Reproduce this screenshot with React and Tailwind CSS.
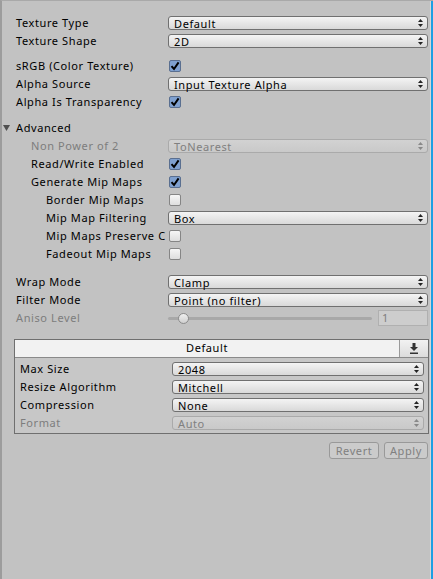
import { useState } from "react";

const font = { fontFamily: '"Noto Sans", "DejaVu Sans", sans-serif' };

// small up/down arrows on the right of every popup
function Arrows({ dim }) {
  return (
    <svg width="5" height="8" viewBox="0 0 5 8" className={dim ? "opacity-40" : ""}>
      <path d="M2.5 0 L5 3 H0 Z" fill="#222" />
      <path d="M2.5 8 L5 5 H0 Z" fill="#222" />
    </svg>
  );
}

function Popup({ value, disabled }) {
  return (
    <div
      className={`flex h-[14px] flex-1 items-center justify-between rounded-[3px] border pl-[5px] pr-[4px] text-[11px] leading-none ${
        disabled
          ? "border-[#aaa] bg-gradient-to-b from-[#d2d2d2] to-[#c9c9c9] text-[#808080]"
          : "border-[#707070] bg-gradient-to-b from-[#f4f4f4] to-[#d9d9d9] text-black"
      }`}
    >
      <span className="tracking-[0.6px]">{value}</span>
      <Arrows dim={disabled} />
    </div>
  );
}

function Check({ on }) {
  return (
    <div
      className={`ml-[1px] flex h-[12px] w-[12px] items-center justify-center rounded-[2px] border ${
        on ? "border-[#5a6f90] bg-[#7fa0cf]" : "border-[#858585] bg-gradient-to-b from-[#f6f6f6] to-[#dedede]"
      }`}
    >
      {on && (
        <svg width="10" height="10" viewBox="0 0 10 10">
          <path d="M1.5 5.2 L4 8 L8.6 1.4" fill="none" stroke="#000" strokeWidth="2" />
        </svg>
      )}
    </div>
  );
}

function Row({ label, indent = 14, dim, children, labelW = 166, padR = 2 }) {
  return (
    <div className="flex h-[18px] items-center" style={{ paddingRight: padR }}>
      <div
        className={`shrink-0 whitespace-nowrap overflow-hidden text-[11px] tracking-[0.6px] ${dim ? "text-[#7d7d7d]" : "text-black"}`}
        style={{ width: labelW, paddingLeft: indent }}
      >
        {label}
      </div>
      <div className="flex flex-1 items-center">{children}</div>
    </div>
  );
}

export default function App() {
  const [open, setOpen] = useState(true);

  return (
    <div
      className="flex h-[579px] w-[433px] border-t border-l-2 border-t-[#a9a9a9] border-l-[#9c9c9c] bg-[#c2c2c2]"
      style={font}
    >
      <div className="flex flex-1 flex-col pt-[13px]">
        <Row label="Texture Type"><Popup value="Default" /></Row>
        <Row label="Texture Shape"><Popup value="2D" /></Row>

        <div className="mt-[7px]">
          <Row label="sRGB (Color Texture)"><Check on /></Row>
          <Row label="Alpha Source"><Popup value="Input Texture Alpha" /></Row>
          <Row label="Alpha Is Transparency"><Check on /></Row>
        </div>

        <div className="mt-[8px]">
          <button
            className="flex h-[18px] items-center text-[11px] tracking-[0.6px] text-black"
            onClick={() => setOpen(!open)}
          >
            <svg width="14" height="10" viewBox="0 0 14 10">
              <path d="M1 2 H8 L4.5 8 Z" fill="#505050" />
            </svg>
            Advanced
          </button>
          {open && (
            <>
              <Row label="Non Power of 2" indent={29} dim><Popup value="ToNearest" disabled /></Row>
              <Row label="Read/Write Enabled" indent={29}><Check on /></Row>
              <Row label="Generate Mip Maps" indent={29}><Check on /></Row>
              <Row label="Border Mip Maps" indent={44}><Check /></Row>
              <Row label="Mip Map Filtering" indent={44}><Popup value="Box" /></Row>
              <Row label="Mip Maps Preserve C" indent={44}><Check /></Row>
              <Row label="Fadeout Mip Maps" indent={44}><Check /></Row>
            </>
          )}
        </div>

        <div className="mt-[10px]">
          <Row label="Wrap Mode"><Popup value="Clamp" /></Row>
          <Row label="Filter Mode"><Popup value="Point (no filter)" /></Row>
          <Row label="Aniso Level" dim>
            <div className="relative flex h-[14px] flex-1 items-center">
              <div className="h-[3px] w-full rounded-full bg-[#a8a8a8]" />
              <div className="absolute left-[10px] h-[11px] w-[11px] rounded-full border border-[#8c8c8c] bg-gradient-to-b from-[#f0f0f0] to-[#cfcfcf]" />
            </div>
            <div className="ml-[6px] flex h-[16px] w-[50px] items-center border border-[#b0b0b0] bg-[#cdcdcd] pl-[3px] text-[11px] text-[#7d7d7d]">
              1
            </div>
          </Row>
        </div>

        {/* platform override box */}
        <div className="ml-[12px] mr-[1px] mt-[12px] border border-[#6f6f6f] bg-[#c7c7c7]">
          <div className="flex h-[18px] items-stretch border-b border-[#8a8a8a] bg-[#f2f2f2]">
            <div className="flex flex-1 items-center justify-center text-[11px] tracking-[0.6px] text-black">Default</div>
            <div className="flex w-[29px] items-center justify-center border-l border-[#9a9a9a] bg-gradient-to-b from-[#f2f2f2] to-[#dcdcdc]">
              <svg width="10" height="11" viewBox="0 0 10 11">
                <path d="M3.5 0 H6.5 V4 H9 L5 8 L1 4 H3.5 Z" fill="#333" />
                <rect x="1" y="9.5" width="8" height="1.5" fill="#333" />
              </svg>
            </div>
          </div>
          <div className="pb-[1px] pt-[2px]">
            <Row label="Max Size" indent={5} labelW={157} padR={4}><Popup value="2048" /></Row>
            <Row label="Resize Algorithm" indent={5} labelW={157} padR={4}><Popup value="Mitchell" /></Row>
            <Row label="Compression" indent={5} labelW={157} padR={4}><Popup value="None" /></Row>
            <Row label="Format" indent={5} labelW={157} padR={4} dim><Popup value="Auto" disabled /></Row>
          </div>
        </div>

        <div className="mr-[2px] mt-[8px] flex justify-end gap-[5px]">
          <button className="h-[17px] w-[50px] rounded-[3px] border border-[#999] bg-[#cbcbcb] text-[11px] tracking-[0.6px] text-[#808080]">
            Revert
          </button>
          <button className="h-[17px] w-[44px] rounded-[3px] border border-[#999] bg-[#cbcbcb] text-[11px] tracking-[0.6px] text-[#808080]">
            Apply
          </button>
        </div>
      </div>
      <div className="w-[1px] bg-[#d6d6d6]" />
      <div className="w-[2px] bg-[#1e9fe3]" />
    </div>
  );
}
